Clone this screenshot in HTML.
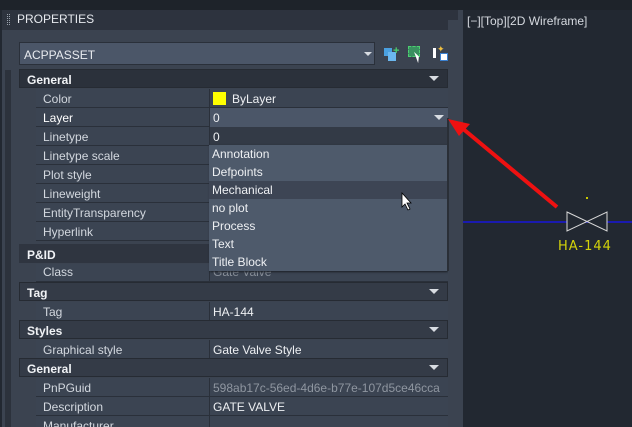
<!DOCTYPE html>
<html><head><style>
*{margin:0;padding:0;box-sizing:border-box}
html,body{width:632px;height:427px;overflow:hidden}
body{background:#222831;font-family:"Liberation Sans","DejaVu Sans",sans-serif;font-size:12px;color:#dfe3ea;position:relative}
.abs{position:absolute}
.panel{left:2px;top:10px;width:461px;height:417px;background:#3b4350}
.hdrbar{left:2px;top:10px;width:456px;height:20px;background:#2d333e}
.row{position:absolute;left:36px;width:412px;height:19px;border-bottom:1px solid #2a303a;background:#3b4452}
.row .l{position:absolute;left:7px;top:3px;color:#d3d8df}
.row .v{position:absolute;left:173px;top:0;width:239px;height:19px;border-left:1px solid #2a303a;padding-left:3px;padding-top:3px;color:#eef0f3}
.sec{position:absolute;left:19px;width:429px;height:19px;background:#343b47;border:1px solid #262b33;font-weight:bold;padding-left:7px;padding-top:3px;color:#f0f2f5}
.tri{position:absolute;right:8px;top:6px;width:0;height:0;border-left:5px solid transparent;border-right:5px solid transparent;border-top:5px solid #d8dce2}
.dd{left:209px;top:145px;width:238px;height:126px;background:#4e5a6b;box-shadow:1px 1px 2px #1a1e24}
.dd div{height:18px;padding-left:3px;padding-top:2px;color:#eef0f3}
</style></head><body>
<div class="abs" style="left:0;top:0;width:632px;height:10px;background:#1e232a"></div>
<div class="abs panel"></div>
<div class="abs hdrbar"></div>
<div class="abs" style="left:7px;top:14px;width:3px;height:11px;border-left:1px dotted #9aa2ad;border-right:1px dotted #9aa2ad"></div>
<div class="abs" style="left:17px;top:12px;color:#e6e9ee">PROPERTIES</div>
<div class="abs" style="left:5px;top:70px;width:6px;height:357px;background:#2c323c"></div>
<div class="abs" style="left:19px;top:42px;width:356px;height:23px;background:#4b5668;border:1px solid #2a303a;padding:5px 4px;color:#e8ebef">ACPPASSET</div>
<div class="abs" style="left:364px;top:52px;border-left:4px solid transparent;border-right:4px solid transparent;border-top:4px solid #d8dce2"></div>
<div class="abs" style="left:384px;top:48px;width:8px;height:8px;background:#4aa0e0"></div>
<div class="abs" style="left:388px;top:52px;width:8px;height:9px;background:#6bb7ef"></div>
<div class="abs" style="left:393px;top:45px;color:#4cd070;font-weight:bold;font-size:11px">+</div>
<div class="abs" style="left:408px;top:46px;width:12px;height:11px;border:1px dashed #4cd070;background:#3a9060"></div>
<div class="abs" style="left:416px;top:51px;width:0;height:0;border-left:3px solid #fff;border-top:6px solid transparent;border-bottom:6px solid transparent;transform:rotate(-20deg)"></div>
<div class="abs" style="left:433px;top:48px;width:3px;height:10px;background:#fff"></div>
<div class="abs" style="left:437px;top:44px;color:#f0c040;font-size:9px">✦</div>
<div class="abs" style="left:440px;top:53px;width:8px;height:8px;background:#fff;border:1px solid #3a80d0"></div>

<div class="sec" style="top:69px;background:#2b313b">General<span class="tri"></span></div>
<div class="row" style="top:89px"><span class="l">Color</span><span class="v"><span style="display:inline-block;width:13px;height:13px;background:#ffff00;vertical-align:-2px;margin-right:6px"></span>ByLayer</span></div>
<div class="row" style="top:108px"><span class="l" style="color:#fff">Layer</span><span class="v" style="background:#4b5668">0<span class="tri" style="right:4px;top:7px"></span></span></div>
<div class="row" style="top:127px"><span class="l">Linetype</span><span class="v" style="background:#333a46">0</span></div>
<div class="row" style="top:146px"><span class="l">Linetype scale</span></div>
<div class="row" style="top:165px"><span class="l">Plot style</span></div>
<div class="row" style="top:184px"><span class="l">Lineweight</span></div>
<div class="row" style="top:203px"><span class="l">EntityTransparency</span></div>
<div class="row" style="top:222px"><span class="l">Hyperlink</span></div>
<div class="sec" style="top:244px;background:#2f3540;border-color:#2f3540">P&amp;ID</div>
<div class="row" style="top:264px;height:18px"><span class="l" style="top:1px">Class</span><span class="v" style="color:#8a919b;padding-top:1px">Gate Valve</span></div>
<div class="sec" style="top:282px">Tag<span class="tri"></span></div>
<div class="row" style="top:302px"><span class="l">Tag</span><span class="v">HA-144</span></div>
<div class="sec" style="top:320px">Styles<span class="tri"></span></div>
<div class="row" style="top:340px"><span class="l">Graphical style</span><span class="v">Gate Valve Style</span></div>
<div class="sec" style="top:358px">General<span class="tri"></span></div>
<div class="row" style="top:378px"><span class="l">PnPGuid</span><span class="v" style="color:#8f96a0">598ab17c-56ed-4d6e-b77e-107d5ce46cca</span></div>
<div class="row" style="top:397px"><span class="l">Description</span><span class="v">GATE VALVE</span></div>
<div class="row" style="top:416px;height:11px;border-bottom:none"><span class="l">Manufacturer</span><span class="v" style="height:11px"></span></div>

<div class="abs dd">
<div>Annotation</div><div>Defpoints</div><div style="background:#3d4554">Mechanical</div><div>no plot</div><div>Process</div><div>Text</div><div>Title Block</div>
</div>
<div class="abs" style="left:448px;top:20px;width:15px;height:407px;background:#3b4350"></div>
<div class="abs" style="left:447px;top:118px;width:2px;height:153px;background:#2a2f37"></div>

<div class="abs" style="left:467px;top:14px;color:#d6dae0;font-size:12px">[−][Top][2D Wireframe]</div>
<svg class="abs" style="left:0;top:0" width="632" height="427">
<line x1="463" y1="222" x2="632" y2="222" stroke="#1a1ab0" stroke-width="2"/>
<path d="M567 212 L607 231 L607 212 L567 231 Z" fill="#222831" stroke="#d8d8d8" stroke-width="1"/>
<rect x="586" y="197" width="2" height="2" fill="#c8c800"/>
<line x1="557" y1="207" x2="462" y2="128" stroke="#ee1111" stroke-width="4"/>
<polygon points="448,119 470,124 459,136" fill="#ee1111"/>
<text x="558" y="250" fill="#d4d40a" font-family="DejaVu Sans,sans-serif" font-size="13" letter-spacing="1">HA-144</text>
<path d="M402 193 L402 207 L405 204 L408 210 L410 209 L407 203 L411 203 Z" fill="#fff" stroke="#000" stroke-width="0.8"/>
</svg>
</body></html>
